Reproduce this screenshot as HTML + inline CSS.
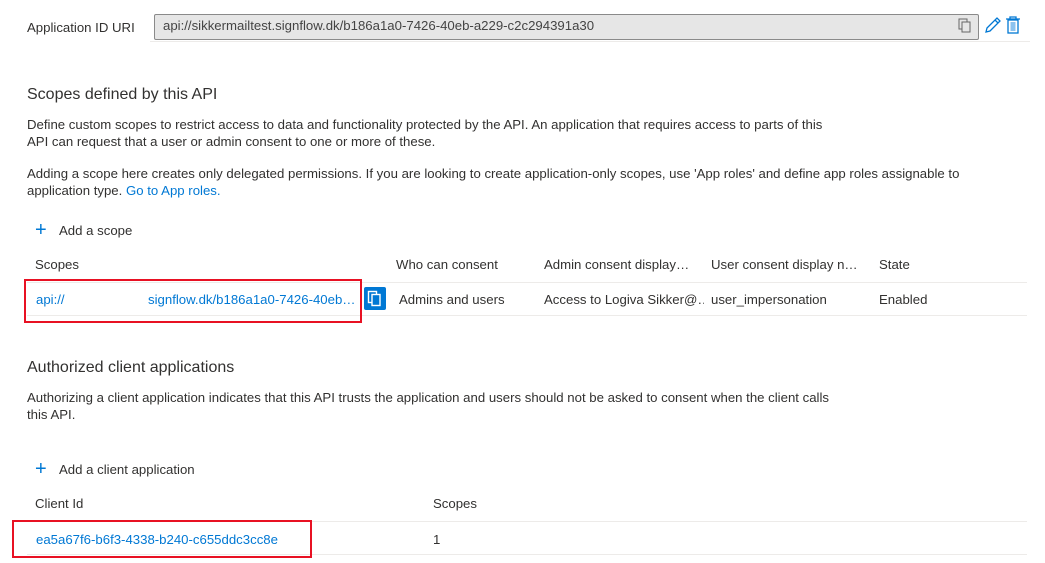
<!DOCTYPE html>
<html><head><style>
body{margin:0;width:1045px;height:563px;background:#fff;font-family:"Liberation Sans",sans-serif;color:#323130;font-size:13.2px;position:relative;overflow:hidden}
.a{position:absolute;white-space:nowrap}
.lk{color:#0078d4}
.h{font-size:16px}
.ln{position:absolute;height:1px;background:#edebe9}
</style></head><body>
<div class="a" style="left:27px;top:20px">Application ID URI</div>
<div class="a" style="left:154px;top:14px;width:823px;height:24px;background:#e6e6e6;border:1px solid #8a8a8a;border-radius:2px"></div>
<div class="a" style="left:163px;top:18px;color:#444">api://sikkermailtest.signflow.dk/b186a1a0-7426-40eb-a229-c2c294391a30</div>
<svg class="a" style="left:958px;top:18px" width="14" height="16"><rect x="1" y="1" width="8" height="10" fill="none" stroke="#666"/><rect x="4" y="4" width="8" height="10" fill="#e6e6e6" stroke="#666"/></svg>
<svg class="a" style="left:984px;top:16px" width="18" height="18"><path d="M2 16 L3 12 L13 2 L16 5 L6 15 Z M11 4 L14 7" fill="none" stroke="#0078d4" stroke-width="1.3"/></svg>
<svg class="a" style="left:1005px;top:16px" width="16" height="18"><path d="M1 3H15M5 3V1H11V3" fill="none" stroke="#0078d4" stroke-width="1.3"/><rect x="3" y="4" width="10" height="13" fill="none" stroke="#0078d4" stroke-width="1.3"/><rect x="5.5" y="6" width="5" height="9" fill="#8cc3ef"/></svg>
<div class="ln" style="left:150px;top:41px;width:880px"></div>

<div class="a h" style="left:27px;top:86px">Scopes defined by this API</div>
<div class="a" style="left:27px;top:116px;line-height:17px">Define custom scopes to restrict access to data and functionality protected by the API. An application that requires access to parts of this<br>API can request that a user or admin consent to one or more of these.</div>
<div class="a" style="left:27px;top:165px;line-height:17px">Adding a scope here creates only delegated permissions. If you are looking to create application-only scopes, use 'App roles' and define app roles assignable to<br>application type. <span class="lk">Go to App roles.</span></div>

<div class="a" style="left:35px;top:219px;font-size:20px;color:#0078d4;font-weight:300">+</div>
<div class="a" style="left:59px;top:223px">Add a scope</div>
<div class="a" style="left:35px;top:257px">Scopes</div>
<div class="a" style="left:396px;top:257px">Who can consent</div>
<div class="a" style="left:544px;top:257px">Admin consent display…</div>
<div class="a" style="left:711px;top:257px">User consent display n…</div>
<div class="a" style="left:879px;top:257px">State</div>
<div class="ln" style="left:27px;top:282px;width:1000px"></div>
<div class="ln" style="left:27px;top:315px;width:1000px"></div>
<div class="a lk" style="left:36px;top:292px">api://</div>
<div class="a lk" style="left:148px;top:292px">signflow.dk/b186a1a0-7426-40eb…</div>
<div class="a" style="left:364px;top:287px;width:22px;height:23px;background:#0078d4;border-radius:2px"></div>
<svg class="a" style="left:367px;top:290px" width="16" height="17"><rect x="1.5" y="1.5" width="8" height="11" fill="none" stroke="#fff" stroke-width="1.4"/><rect x="5" y="4.5" width="8" height="11" fill="#0078d4" stroke="#fff" stroke-width="1.4"/></svg>
<div class="a" style="left:399px;top:292px">Admins and users</div>
<div class="a" style="left:544px;top:292px;width:160px;overflow:hidden">Access to Logiva Sikker@…</div>
<div class="a" style="left:711px;top:292px">user_impersonation</div>
<div class="a" style="left:879px;top:292px">Enabled</div>
<div class="a" style="left:24px;top:279px;width:334px;height:40px;border:2px solid #e81123"></div>

<div class="a h" style="left:27px;top:359px">Authorized client applications</div>
<div class="a" style="left:27px;top:389px;line-height:17px">Authorizing a client application indicates that this API trusts the application and users should not be asked to consent when the client calls<br>this API.</div>
<div class="a" style="left:35px;top:458px;font-size:20px;color:#0078d4;font-weight:300">+</div>
<div class="a" style="left:59px;top:462px">Add a client application</div>
<div class="a" style="left:35px;top:496px">Client Id</div>
<div class="a" style="left:433px;top:496px">Scopes</div>
<div class="ln" style="left:27px;top:521px;width:1000px"></div>
<div class="ln" style="left:27px;top:554px;width:1000px"></div>
<div class="a lk" style="left:36px;top:532px">ea5a67f6-b6f3-4338-b240-c655ddc3cc8e</div>
<div class="a" style="left:433px;top:532px">1</div>
<div class="a" style="left:12px;top:520px;width:296px;height:34px;border:2px solid #e81123"></div>
</body></html>
